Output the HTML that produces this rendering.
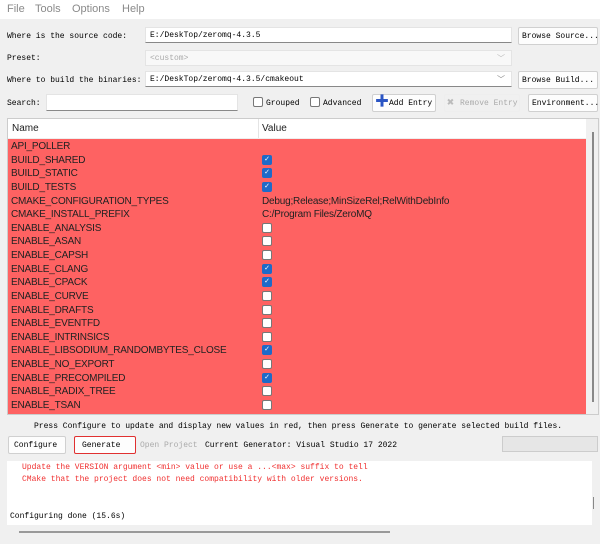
<!DOCTYPE html><html><head><style>
*{margin:0;padding:0;box-sizing:border-box}
body{width:600px;height:544px;background:#f0f0f0;position:relative;overflow:hidden;font-family:"Liberation Mono","Noto Sans CJK SC",monospace;font-size:8px;color:#000}
.a{position:absolute;white-space:nowrap}
.menu{top:0;left:0;width:600px;height:19px;background:#fff;font-family:"Liberation Sans",sans-serif;font-size:11px;color:#8a8a8a}
.in{background:#fff;border:1px solid #e4e4e4;border-bottom:1px solid #888;height:16px;padding:3px 4px}
.btn{background:#fdfdfd;border:1px solid #d0d0d0;border-radius:2px;height:18px;padding:4px 3px}
.cb{width:10px;height:10px;border:1px solid #777;border-radius:2px;background:#fff}
.row{left:8px;width:578px;height:13.6px;font-family:"Liberation Sans",sans-serif;font-size:10px;letter-spacing:-0.2px;color:#222;padding-left:3px;line-height:15px}
.ck{position:absolute;left:254px;top:2px;width:10px;height:10px;border-radius:2px}
.on{background:#1e6ac8;color:#fff;font-size:7px;line-height:10px;text-align:center}
.off{background:#fff;border:1px solid #777}
.v{position:absolute;left:254px;top:0}
</style></head><body>
<div class="a menu"><span class="a" style="left:7px;top:3px">File</span><span class="a" style="left:35px;top:3px">Tools</span><span class="a" style="left:72px;top:3px">Options</span><span class="a" style="left:122px;top:3px">Help</span></div>
<div class="a" style="left:7px;top:32px">Where is the source code:</div>
<div class="a in" style="left:145px;top:27px;width:367px">E:/DeskTop/zeromq-4.3.5</div>
<div class="a btn" style="left:518px;top:27px;width:80px">Browse Source...</div>
<div class="a" style="left:7px;top:54px">Preset:</div>
<div class="a in" style="left:145px;top:50px;width:367px;border-bottom-color:#e4e4e4;background:#f8f8f8;color:#aaa">&lt;custom&gt;<span class="a" style="right:6px;top:2px;color:#bbb">﹀</span></div>
<div class="a" style="left:7px;top:76px">Where to build the binaries:</div>
<div class="a in" style="left:145px;top:71px;width:367px">E:/DeskTop/zeromq-4.3.5/cmakeout<span class="a" style="right:6px;top:2px;color:#888">﹀</span></div>
<div class="a btn" style="left:518px;top:71px;width:80px">Browse Build...</div>
<div class="a" style="left:7px;top:99px">Search:</div>
<div class="a in" style="left:46px;top:94px;width:192px;height:17px"></div>
<div class="a cb" style="left:253px;top:97px"></div><div class="a" style="left:266px;top:99px">Grouped</div>
<div class="a cb" style="left:310px;top:97px"></div><div class="a" style="left:323px;top:99px">Advanced</div>
<div class="a btn" style="left:372px;top:94px;width:64px;padding-left:16px"><span class="a" style="left:2px;top:1px;color:#2b55c4;font-size:14px;font-weight:bold;line-height:14px">✚</span>Add Entry</div>
<div class="a btn" style="left:444px;top:94px;width:76px;padding-left:15px;color:#aaa;background:#f0f0f0;border-color:#eee"><span class="a" style="left:2px;top:2px;color:#bbb;font-size:12px;line-height:12px">✖</span>Remove Entry</div>
<div class="a btn" style="left:528px;top:94px;width:70px">Environment...</div>
<div class="a" style="left:7px;top:118px;width:592px;height:297px;background:#fff;border:1px solid #ccc"></div>
<div class="a" style="left:8px;top:119px;width:578px;height:20px;background:#fff;border-bottom:1px solid #eee;font-family:'Liberation Sans',sans-serif;font-size:10px;color:#222"><span class="a" style="left:4px;top:4px">Name</span><span class="a" style="left:250px;top:0;width:1px;height:19px;background:#e4e4e4"></span><span class="a" style="left:254px;top:4px">Value</span></div>
<div class="a" style="left:586px;top:119px;width:12px;height:295px;background:#f0f0f0"></div>
<div class="a" style="left:592px;top:132px;width:2px;height:270px;background:#888"></div>
<div class="a" style="left:8px;top:139px;width:578px;height:275px;background:#fe6262"></div>
<div id="rows"></div>
<div class="a" style="left:34px;top:422px">Press Configure to update and display new values in red, then press Generate to generate selected build files.</div>
<div class="a btn" style="left:8px;top:436px;width:58px;padding:4px 5px">Configure</div>
<div class="a btn" style="left:74px;top:436px;width:62px;padding:4px 7px;border:1px solid #e03030">Generate</div>
<div class="a" style="left:140px;top:441px;color:#aaa">Open Project</div>
<div class="a" style="left:205px;top:441px">Current Generator: Visual Studio 17 2022</div>
<div class="a" style="left:502px;top:436px;width:96px;height:16px;background:#e6e6e6;border:1px solid #ccc"></div>
<div class="a" style="left:7px;top:461px;width:585px;height:64px;background:#fff"></div>
<div class="a" style="left:22px;top:463px;color:#f03030">Update the VERSION argument &lt;min&gt; value or use a ...&lt;max&gt; suffix to tell</div>
<div class="a" style="left:22px;top:475px;color:#f03030">CMake that the project does not need compatibility with older versions.</div>
<div class="a" style="left:10px;top:512px">Configuring done (15.6s)</div>
<div class="a" style="left:593px;top:497px;width:1px;height:12px;background:#888"></div>
<div class="a" style="left:19px;top:531px;width:371px;height:2px;background:#999"></div>
<script>
var r=[["API_POLLER",""],["BUILD_SHARED",1],["BUILD_STATIC",1],["BUILD_TESTS",1],["CMAKE_CONFIGURATION_TYPES","Debug;Release;MinSizeRel;RelWithDebInfo"],["CMAKE_INSTALL_PREFIX","C:/Program Files/ZeroMQ"],["ENABLE_ANALYSIS",0],["ENABLE_ASAN",0],["ENABLE_CAPSH",0],["ENABLE_CLANG",1],["ENABLE_CPACK",1],["ENABLE_CURVE",0],["ENABLE_DRAFTS",0],["ENABLE_EVENTFD",0],["ENABLE_INTRINSICS",0],["ENABLE_LIBSODIUM_RANDOMBYTES_CLOSE",1],["ENABLE_NO_EXPORT",0],["ENABLE_PRECOMPILED",1],["ENABLE_RADIX_TREE",0],["ENABLE_TSAN",0]];
var h="";r.forEach(function(x,i){var v=x[1];var s;if(v===1)s='<span class="ck on">✓</span>';else if(v===0)s='<span class="ck off"></span>';else s='<span class="v">'+v+'</span>';h+='<div class="a row" style="top:'+(139+i*13.63)+'px">'+x[0]+s+'</div>';});
document.getElementById("rows").outerHTML=h;
</script>
</body></html>
